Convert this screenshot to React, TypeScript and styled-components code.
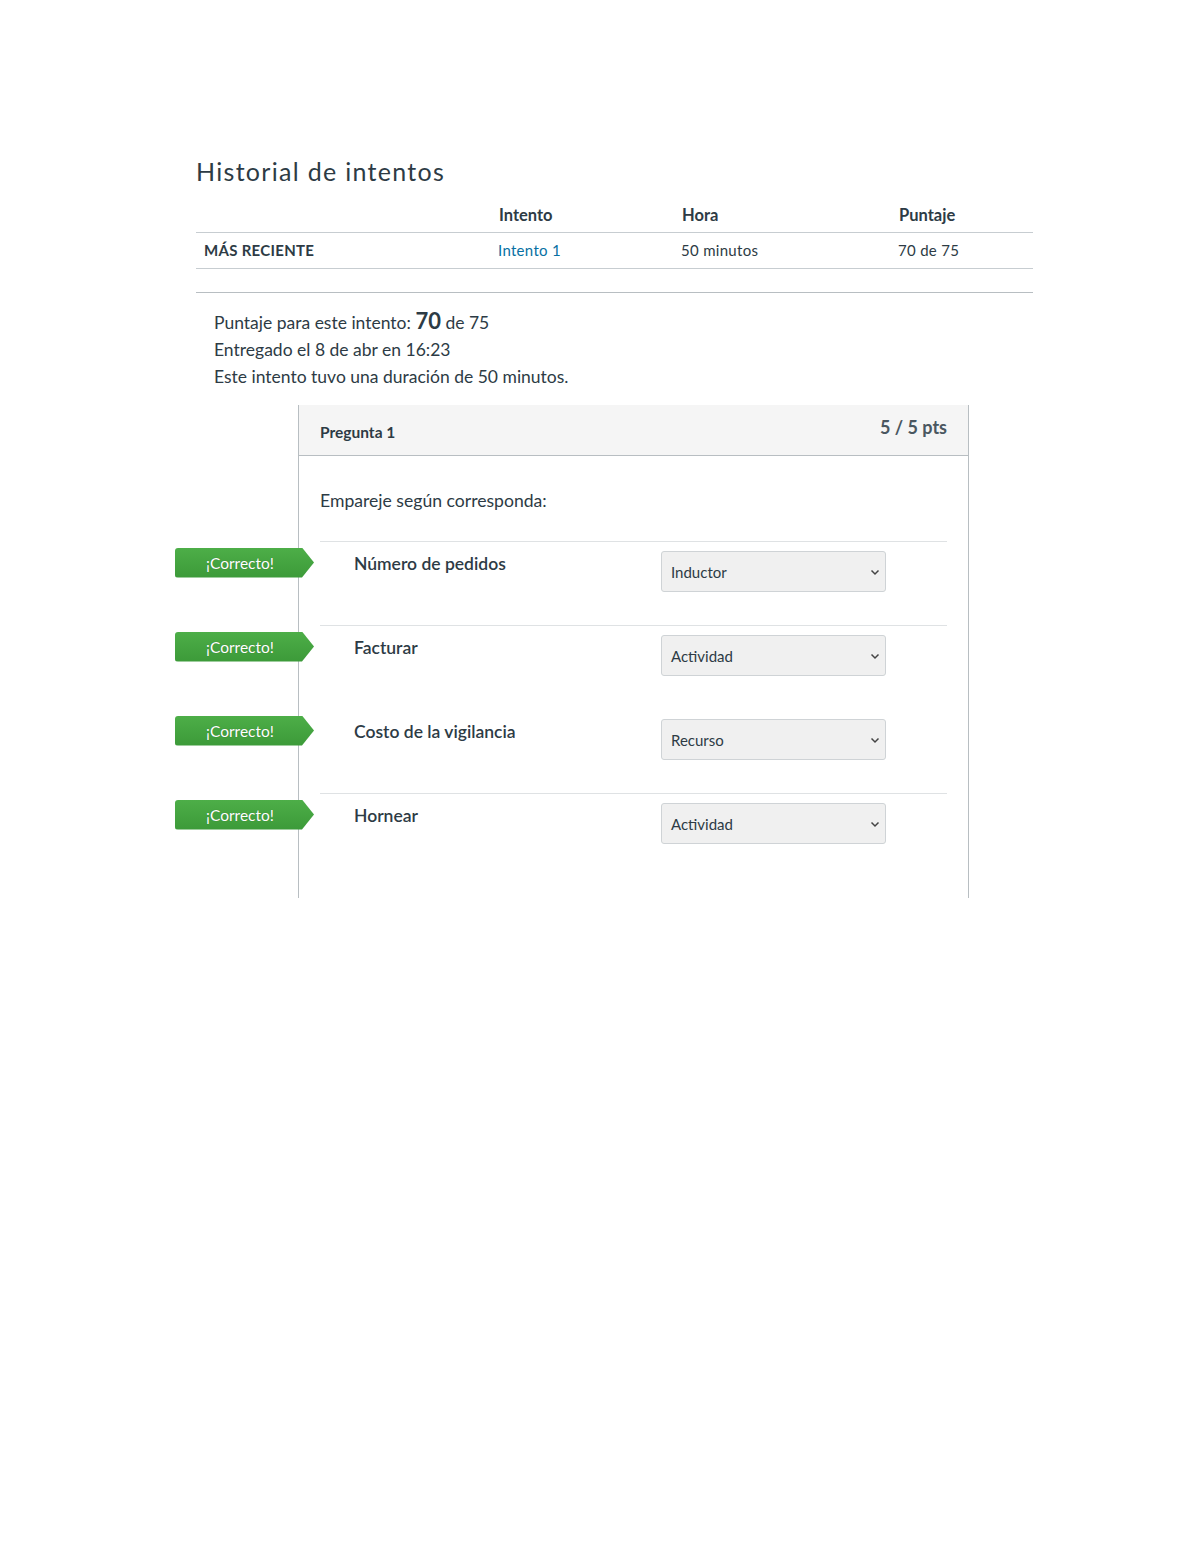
import styled, { createGlobalStyle } from "styled-components";

const GlobalStyle = createGlobalStyle`
  html, body {
    margin: 0;
    padding: 0;
    background: #ffffff;
  }
  body {
    font-family: Lato, "Open Sans", "Liberation Sans", sans-serif;
    color: #2d3b45;
  }
`;

type Attempt = {
  label: string;
  attempt: string;
  time: string;
  score: string;
};

type Match = {
  prompt: string;
  answer: string;
  divider: boolean;
};

const attempts: Attempt[] = [
  { label: "MÁS RECIENTE", attempt: "Intento 1", time: "50 minutos", score: "70 de 75" },
];

const matches: Match[] = [
  { prompt: "Número de pedidos", answer: "Inductor", divider: true },
  { prompt: "Facturar", answer: "Actividad", divider: true },
  { prompt: "Costo de la vigilancia", answer: "Recurso", divider: false },
  { prompt: "Hornear", answer: "Actividad", divider: true },
];

const App = () => {
  return (
    <>
      <GlobalStyle />
      <Page>
        <Title>Historial de intentos</Title>

        <HistoryTable>
          <colgroup>
            <col style={{ width: 294 }} />
            <col style={{ width: 183 }} />
            <col style={{ width: 217 }} />
            <col />
          </colgroup>
          <thead>
            <tr>
              <HeadCell />
              <HeadCell>Intento</HeadCell>
              <HeadCell>Hora</HeadCell>
              <HeadCell>Puntaje</HeadCell>
            </tr>
          </thead>
          <tbody>
            {attempts.map((a) => (
              <tr key={a.attempt}>
                <BodyCell $strong>{a.label}</BodyCell>
                <BodyCell>
                  <AttemptLink href="#">{a.attempt}</AttemptLink>
                </BodyCell>
                <BodyCell>{a.time}</BodyCell>
                <BodyCell>{a.score}</BodyCell>
              </tr>
            ))}
          </tbody>
        </HistoryTable>

        <Rule />

        <Summary>
          <SummaryLine>
            Puntaje para este intento: <BigScore>70</BigScore> de 75
          </SummaryLine>
          <SummaryLine>Entregado el 8 de abr en 16:23</SummaryLine>
          <SummaryLine>Este intento tuvo una duración de 50 minutos.</SummaryLine>
        </Summary>

        <Question>
          <QuestionHeader>
            <QuestionName>Pregunta 1</QuestionName>
            <Points>5 / 5 pts</Points>
          </QuestionHeader>

          <QuestionBody>
            <Prompt>Empareje según corresponda:</Prompt>

            {matches.map((m) => (
              <MatchRow key={m.prompt} $divider={m.divider}>
                <Badge>
                  <BadgeText>¡Correcto!</BadgeText>
                </Badge>
                <MatchLabel>{m.prompt}</MatchLabel>
                <Select>
                  <span>{m.answer}</span>
                  <svg width="10" height="7" viewBox="0 0 10 7">
                    <path
                      d="M1.5 1.5 L5 5 L8.5 1.5"
                      fill="none"
                      stroke="#444"
                      strokeWidth="1.5"
                    />
                  </svg>
                </Select>
              </MatchRow>
            ))}
          </QuestionBody>
        </Question>
      </Page>
    </>
  );
};

const Page = styled.div`
  width: 837px;
  padding: 155px 0 200px 196px;
`;

const Title = styled.h1`
  margin: 0 0 11px;
  font-size: 25px;
  line-height: 32px;
  font-weight: 400;
  color: #2d3b45;
  letter-spacing: 1.3px;
`;

const HistoryTable = styled.table`
  width: 100%;
  border-collapse: collapse;
  table-layout: fixed;
`;

const HeadCell = styled.th`
  box-sizing: border-box;
  text-align: left;
  font-size: 16.5px;
  font-weight: 700;
  height: 34px;
  padding: 0 9px;
  border-bottom: 1px solid #c7cdd1;
  color: #2d3b45;
`;

const BodyCell = styled.td<{ $strong?: boolean }>`
  box-sizing: border-box;
  font-size: 15px;
  letter-spacing: 0.3px;
  height: 36px;
  padding: 0 8px;
  font-weight: ${(p) => (p.$strong ? 700 : 400)};
  border-bottom: 1px solid #c7cdd1;
  color: #2d3b45;
`;

const AttemptLink = styled.a`
  color: #0770a3;
  text-decoration: none;
`;

const Rule = styled.hr`
  margin: 23px 0 0;
  border: none;
  border-top: 1px solid #b8bec2;
`;

const Summary = styled.div`
  padding: 14px 0 0 18px;
`;

const SummaryLine = styled.div`
  font-size: 17.5px;
  line-height: 27px;
  color: #2d3b45;
`;

const BigScore = styled.span`
  font-size: 22px;
  font-weight: 700;
`;

const Question = styled.div`
  margin: 15px 0 0 102px;
  width: 669px;
  border-left: 1px solid #b8bec2;
  border-right: 1px solid #b8bec2;
`;

const QuestionHeader = styled.div`
  display: flex;
  align-items: center;
  justify-content: space-between;
  height: 50px;
  padding: 0 21px;
  background: #f5f5f5;
  border-bottom: 1px solid #b8bec2;
`;

const QuestionName = styled.div`
  font-size: 15.5px;
  font-weight: 700;
  margin-top: 4px;
`;

const Points = styled.div`
  font-size: 18px;
  font-weight: 700;
  color: #4a5760;
  margin-top: -6px;
`;

const QuestionBody = styled.div`
  padding: 33px 21px 21px;
`;

const Prompt = styled.div`
  font-size: 17.6px;
  line-height: 24px;
  margin-bottom: 28px;
`;

const MatchRow = styled.div<{ $divider: boolean }>`
  position: relative;
  display: flex;
  align-items: flex-start;
  height: 83px;
  border-top: 1px solid ${(p) => (p.$divider ? "#dfe2e4" : "transparent")};
`;

const Badge = styled.div`
  position: absolute;
  left: -145px;
  top: 6px;
  width: 139px;
  height: 30px;
  display: flex;
  align-items: center;
  background: linear-gradient(#4dae48, #3c9a39);
  clip-path: polygon(0 0, 127px 0, 139px 50%, 127px 100%, 0 100%);
  border-radius: 3px 0 0 3px;
`;

const BadgeText = styled.span`
  width: 130px;
  text-align: center;
  color: #ffffff;
  font-size: 15.5px;
  text-shadow: 0 0 1px rgba(0, 0, 0, 0.3);
`;

const MatchLabel = styled.div`
  width: 307px;
  padding: 11px 0 0 34px;
  font-size: 17.5px;
  font-weight: 600;
  line-height: 22px;
  color: #2d3b45;
`;

const Select = styled.div`
  margin-top: 9px;
  width: 225px;
  height: 41px;
  box-sizing: border-box;
  display: flex;
  align-items: center;
  justify-content: space-between;
  padding: 2px 5px 0 9px;
  background: #f0f0f0;
  border: 1px solid #cfd3d6;
  border-radius: 3px;
  font-size: 15px;
  color: #2d3b45;
`;

export default App;
